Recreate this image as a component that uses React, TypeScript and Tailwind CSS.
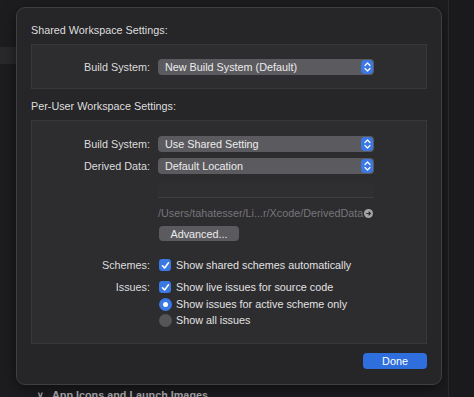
import React from "react";

function Stepper() {
  return (
    <div className="flex h-[14px] w-[12px] items-center justify-center rounded-[4px] bg-[#3b78e6]">
      <svg width="7" height="10" viewBox="0 0 7 10" fill="none">
        <path d="M1 3.5 L3.5 1 L6 3.5" stroke="white" strokeWidth="1.2" strokeLinecap="round" strokeLinejoin="round" />
        <path d="M1 6.5 L3.5 9 L6 6.5" stroke="white" strokeWidth="1.2" strokeLinecap="round" strokeLinejoin="round" />
      </svg>
    </div>
  );
}

function Popup({ value }: { value: string }) {
  return (
    <div className="flex h-[16px] w-[216px] items-center justify-between rounded-[4px] bg-[#5b5a5e] pl-[7px] pr-[1px] text-[#ececec]">
      <span>{value}</span>
      <Stepper />
    </div>
  );
}

function Check() {
  return (
    <div className="flex h-[12px] w-[12px] shrink-0 items-center justify-center rounded-[3px] bg-[#3a78e4]">
      <svg width="9" height="9" viewBox="0 0 9 9" fill="none">
        <path d="M1.5 4.8 L3.6 7 L7.5 1.8" stroke="white" strokeWidth="1.6" strokeLinecap="round" strokeLinejoin="round" />
      </svg>
    </div>
  );
}

function Radio({ on }: { on?: boolean }) {
  return (
    <div
      className={`flex h-[13px] w-[13px] shrink-0 items-center justify-center rounded-full ${
        on ? "bg-[#3a78e4]" : "bg-[#555457]"
      }`}
    >
      {on && <div className="h-[5px] w-[5px] rounded-full bg-white" />}
    </div>
  );
}

function Row({ label, top, children }: { label?: string; top?: boolean; children: React.ReactNode }) {
  return (
    <div className={`flex ${top ? "items-start" : "items-center"}`}>
      <div className="w-[119px] pr-[1px] text-right text-[#dcdcdc]">{label}</div>
      <div className="ml-[7px] flex items-center">{children}</div>
    </div>
  );
}

export default function App() {
  return (
    <div
      className="flex h-[397px] w-[474px] overflow-hidden bg-[#1d1c1f] text-[10.8px] leading-[14px]"
      style={{ fontFamily: "'Liberation Sans', Arial, sans-serif" }}
    >
      {/* left strip of the window behind */}
      <div className="w-[16px] shrink-0 pt-[47px]">
        <div className="h-[17px] bg-[#29282b]" />
      </div>

      <div className="flex w-[426px] shrink-0 flex-col pt-[7px]">
        {/* sheet */}
        <div className="h-[378px] shrink-0 rounded-[9px] border border-[#3f3e42] bg-[#262528] px-[14px] pt-[15px] shadow-[0_4px_14px_rgba(0,0,0,0.5)]">
          <div className="text-[#dedede]">Shared Workspace Settings:</div>

          <div className="mt-[7px] h-[45px] border border-[#38373a] bg-[#2d2c2f] pt-[14px]">
            <Row label="Build System:">
              <Popup value="New Build System (Default)" />
            </Row>
          </div>

          <div className="mt-[10px] text-[#dedede]">Per-User Workspace Settings:</div>

          <div className="mt-[7px] h-[224px] border border-[#38373a] bg-[#2d2c2f] pt-[15px]">
            <div className="flex flex-col gap-[6px]">
              <Row label="Build System:">
                <Popup value="Use Shared Setting" />
              </Row>
              <Row label="Derived Data:">
                <Popup value="Default Location" />
              </Row>
            </div>

            <div className="mt-[9px]">
              <Row>
                <div className="h-[15px] w-[216px] border-b border-[#3d3c40] bg-[#2f2e31]" />
              </Row>
            </div>

            <div className="mt-[8px]">
              <Row>
                <div className="flex w-[216px] items-center justify-between text-[#77767a]">
                  <span className="whitespace-nowrap">/Users/tahatesser/Li...r/Xcode/DerivedData</span>
                  <svg width="9" height="9" viewBox="0 0 9 9" className="mr-[1px] shrink-0">
                    <circle cx="4.5" cy="4.5" r="4.5" fill="#a5a4a8" />
                    <path d="M2.2 4.5 H6.4 M4.6 2.7 L6.4 4.5 L4.6 6.3" stroke="#2d2c2f" strokeWidth="1.2" fill="none" />
                  </svg>
                </div>
              </Row>
            </div>

            <div className="mt-[6px]">
              <Row>
                <div className="ml-[1px] flex h-[15px] w-[80px] items-center justify-center rounded-[4px] bg-[#5b5a5e] text-[#ececec]">
                  Advanced...
                </div>
              </Row>
            </div>

            <div className="mt-[17px]">
              <Row label="Schemes:">
                <div className="ml-[1px] flex items-center gap-[5px] text-[#e2e2e2]">
                  <Check />
                  <span>Show shared schemes automatically</span>
                </div>
              </Row>
            </div>

            <div className="mt-[8px]">
              <Row label="Issues:" top>
                <div className="ml-[1px] flex flex-col gap-[3px] text-[#e2e2e2]">
                  <div className="flex items-center gap-[5px]">
                    <Check />
                    <span>Show live issues for source code</span>
                  </div>
                  <div className="flex items-center gap-[4px]">
                    <Radio on />
                    <span>Show issues for active scheme only</span>
                  </div>
                  <div className="-mt-[1px] flex items-center gap-[4px]">
                    <Radio />
                    <span>Show all issues</span>
                  </div>
                </div>
              </Row>
            </div>
          </div>

          <div className="mt-[9px] flex justify-end">
            <div className="flex h-[16px] w-[64px] items-center justify-center rounded-[4px] bg-[#2f6fdd] text-white">
              Done
            </div>
          </div>
        </div>

        {/* list behind, cut by the bottom edge as in the screenshot */}
        <div className="mt-[3px] flex items-center gap-[8px] pl-[21px] font-semibold text-[#9c9ba0]">
          <span className="text-[9px]">∨</span>
          <span>App Icons and Launch Images</span>
        </div>
      </div>

      {/* right strip of the window behind */}
      <div className="ml-[6px] flex-1 border-l border-[#2a292c] bg-[#1a191c]" />
    </div>
  );
}
